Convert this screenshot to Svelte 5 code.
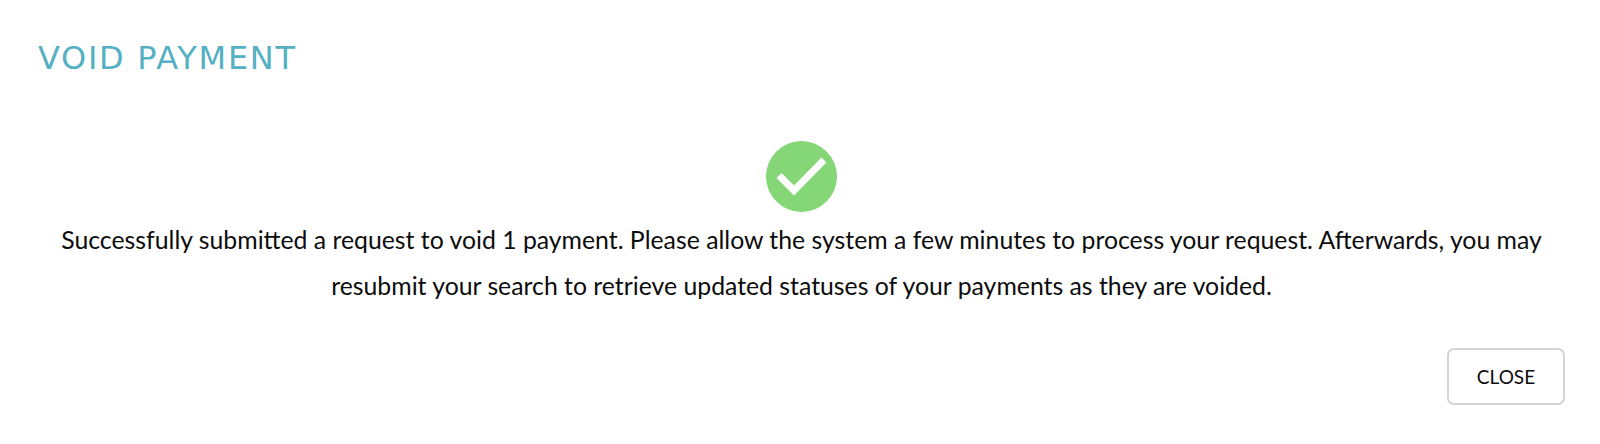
<script lang="ts">
  let title = 'VOID PAYMENT';
  let message =
    'Successfully submitted a request to void 1 payment. Please allow the system a few minutes to process your request. Afterwards, you may resubmit your search to retrieve updated statuses of your payments as they are voided.';
</script>

<div class="modal">
  <h2 class="title">{title}</h2>

  <div class="body">
    <svg class="check" width="71" height="71" viewBox="0 0 71 71" aria-hidden="true">
      <circle cx="35.5" cy="35.5" r="35.5" fill="#84d677" />
      <path d="M13 34.500 L28 49.500 L58 19" fill="none" stroke="#fff" stroke-width="7" />
    </svg>
    <p class="message">{message}</p>
  </div>

  <div class="footer">
    <button type="button" class="close-btn">CLOSE</button>
  </div>
</div>

<style>
  :global(body) {
    margin: 0;
    background: #fff;
  }

  .modal {
    height: 444px;
    box-sizing: border-box;
    padding: 41px 35px 0 38px;
    display: flex;
    flex-direction: column;
    font-family: Lato, 'Liberation Sans', sans-serif;
  }

  .title {
    margin: 0;
    font-family: 'DejaVu Sans', sans-serif;
    font-weight: 400;
    font-size: 32px;
    letter-spacing: 1.700px;
    line-height: 35px;
    color: #55b0c3;
  }

  .body {
    margin-top: 65px;
    display: flex;
    flex-direction: column;
    align-items: center;
  }

  .check {
    display: block;
  }

  .message {
    margin: 5px 0 0;
    width: 1500px;
    font-size: 24.800px;
    line-height: 46px;
    text-align: center;
    color: #0c0c0c;
  }

  .footer {
    margin-top: 39px;
    display: flex;
    justify-content: flex-end;
  }

  .close-btn {
    width: 118px;
    height: 57px;
    background: #fff;
    border: 2px solid #d4d4d4;
    border-radius: 7px;
    font-family: Lato, 'Liberation Sans', sans-serif;
    font-size: 19px;
    color: #0c0c0c;
    cursor: pointer;
  }
</style>
